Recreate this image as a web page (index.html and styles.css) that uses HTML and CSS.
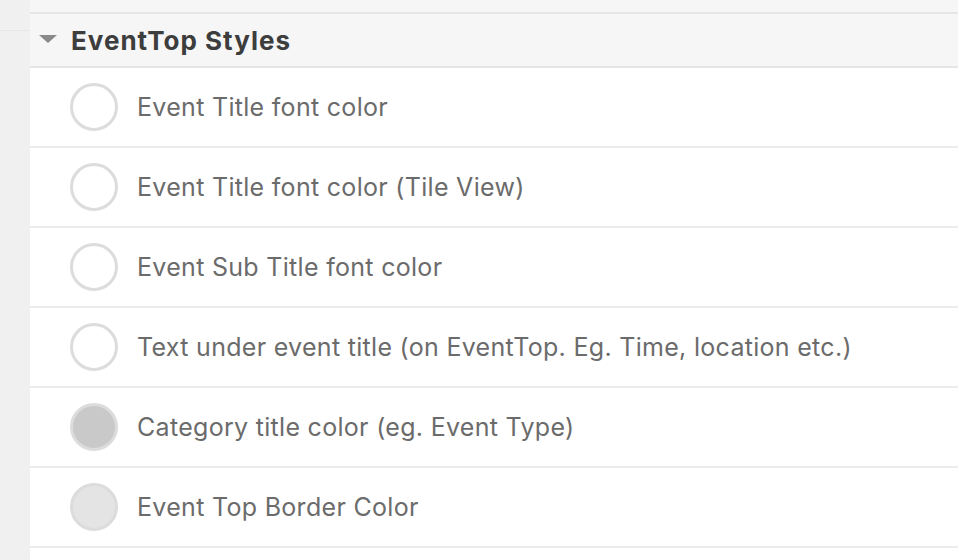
FILE: index.html
```html
<!DOCTYPE html>
<html>
  <head>
    <meta charset="UTF-8">
    <title>EventTop Styles</title>
    <link rel="stylesheet" href="styles.css">
  </head>
  <body>
    <div class="page">
      <!-- left gutter -->
      <div class="gutter">
        <div class="gutter-top"></div>
      </div>

      <div class="panel">
        <div class="panel-top"></div>

        <!-- section header -->
        <div class="section-head">
          <span class="caret"></span>
          <h3>EventTop Styles</h3>
        </div>

        <!-- color rows -->
        <div class="row">
          <span class="swatch"></span>
          <span class="label">Event Title font color</span>
        </div>
        <div class="row">
          <span class="swatch"></span>
          <span class="label">Event Title font color (Tile View)</span>
        </div>
        <div class="row">
          <span class="swatch"></span>
          <span class="label">Event Sub Title font color</span>
        </div>
        <div class="row">
          <span class="swatch"></span>
          <span class="label">Text under event title (on EventTop. Eg. Time, location etc.)</span>
        </div>
        <div class="row">
          <span class="swatch swatch-mid"></span>
          <span class="label">Category title color (eg. Event Type)</span>
        </div>
        <div class="row">
          <span class="swatch swatch-light"></span>
          <span class="label">Event Top Border Color</span>
        </div>
        <div class="filler"></div>
      </div>
    </div>
  </body>
</html>
```

FILE: styles.css
```css
html, body {
  margin: 0;
  padding: 0;
  background: white;
  font-family: Inter, "Liberation Sans", Arial, sans-serif;
}
.page {
  display: flex;
  height: 560px;
  overflow: hidden;
}
.gutter {
  width: 30px;
  flex-shrink: 0;
  background-color: #f0f0f0;
}
.gutter-top {
  height: 30px;
  border-bottom: 1px solid #e6e6e6;
}
.panel {
  flex: 1;
  display: flex;
  flex-direction: column;
}
.panel-top {
  height: 12px;
  flex-shrink: 0;
  background-color: #f6f6f6;
  border-bottom: 2px solid #e6e6e6;
}
.section-head {
  height: 52px;
  flex-shrink: 0;
  display: flex;
  align-items: center;
  background-color: #f6f6f6;
  border-bottom: 2px solid #e6e6e6;
}
.caret {
  width: 0;
  height: 0;
  margin-left: 9px;
  border-left: 9px solid transparent;
  border-right: 9px solid transparent;
  border-top: 8px solid #8a8a8a;
  margin-top: -2px;
}
.section-head h3 {
  margin: 0 0 0 14px;
  font-size: 26px;
  font-weight: bold;
  letter-spacing: 1px;
  color: #3d3d3d;
}
.row {
  height: 78px;
  flex-shrink: 0;
  display: flex;
  align-items: center;
  border-bottom: 2px solid #ececec;
}
.filler {
  flex: 1;
}
.swatch {
  width: 42px;
  height: 42px;
  margin-left: 40px;
  border: 3px solid #dcdcdc;
  border-radius: 50%;
  background-color: white;
  flex-shrink: 0;
}
.swatch-mid {
  background-color: #c9c9c9;
}
.swatch-light {
  background-color: #e4e4e4;
}
.label {
  margin-left: 19px;
  font-size: 25px;
  letter-spacing: 0.3px;
  color: #6b6b6b;
}
```
